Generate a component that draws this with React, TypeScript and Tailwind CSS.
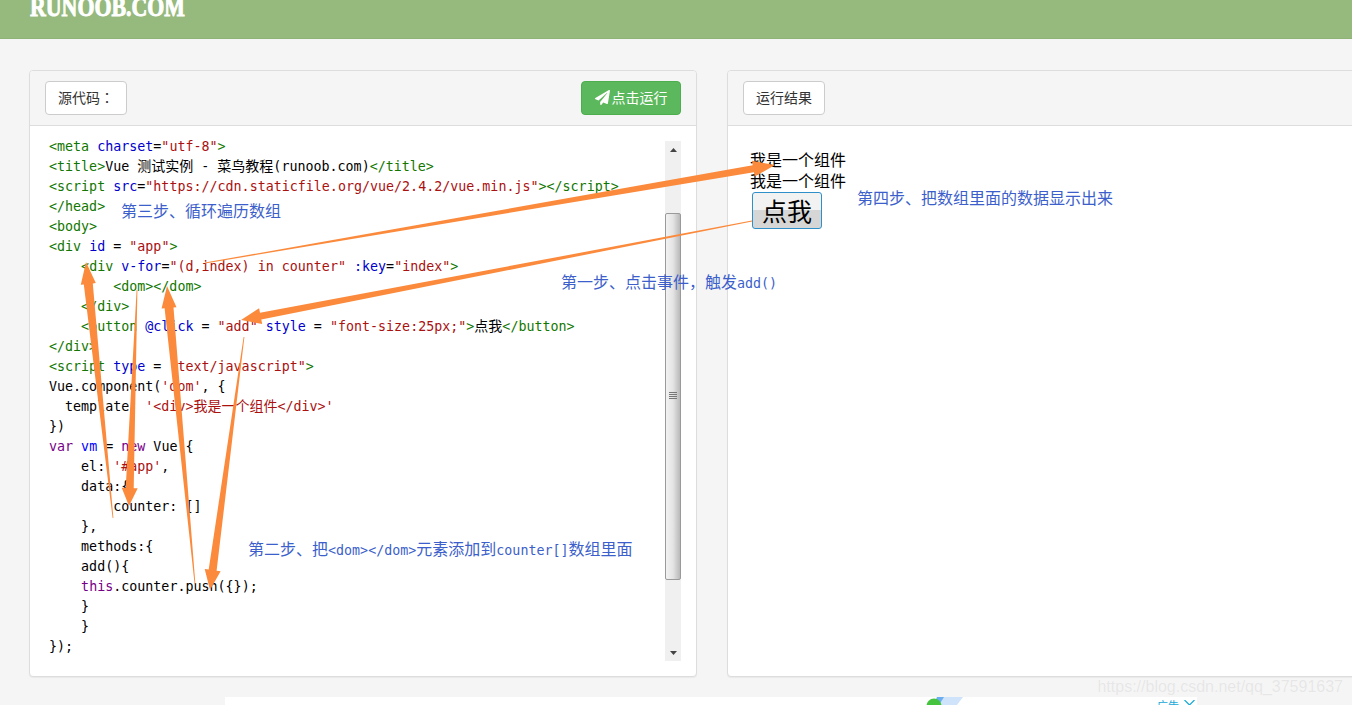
import type { ReactNode } from "react"
import { FaPaperPlane } from "react-icons/fa"

const cjk = '"Noto Sans CJK SC", sans-serif'

type Pt = [number, number]

// tapered arrow: thin at the start, thick at the head
function arrowPoints(from: Pt, to: Pt, headLen: number, headW: number, shaftW: number) {
  const dx = to[0] - from[0]
  const dy = to[1] - from[1]
  const len = Math.hypot(dx, dy)
  const ux = dx / len
  const uy = dy / len
  const nx = -uy
  const ny = ux
  const bx = to[0] - ux * headLen
  const by = to[1] - uy * headLen
  const p = (x: number, y: number) => `${x.toFixed(1)},${y.toFixed(1)}`
  return [
    p(from[0] + nx * 0.4, from[1] + ny * 0.4),
    p(bx + (nx * shaftW) / 2, by + (ny * shaftW) / 2),
    p(bx + (nx * headW) / 2, by + (ny * headW) / 2),
    p(to[0], to[1]),
    p(bx - (nx * headW) / 2, by - (ny * headW) / 2),
    p(bx - (nx * shaftW) / 2, by - (ny * shaftW) / 2),
    p(from[0] - nx * 0.4, from[1] - ny * 0.4),
  ].join(" ")
}

const arrows: { from: Pt; to: Pt; len: number; w: number; shaft: number }[] = [
  { from: [205, 263], to: [775, 165], len: 22, w: 16, shaft: 7 },
  { from: [752, 221], to: [241, 320], len: 20, w: 16, shaft: 7 },
  { from: [113, 518], to: [86, 262], len: 22, w: 15, shaft: 9 },
  { from: [137, 290], to: [129, 506], len: 18, w: 16, shaft: 8 },
  { from: [195, 584], to: [167, 286], len: 22, w: 15, shaft: 9 },
  { from: [244, 337], to: [210, 590], len: 20, w: 16, shaft: 8 },
]

const G = ({ children }: { children: ReactNode }) => <span className="text-[#117700]">{children}</span>
const A = ({ children }: { children: ReactNode }) => <span className="text-[#0000cc]">{children}</span>
const S = ({ children }: { children: ReactNode }) => <span className="text-[#aa1111]">{children}</span>
const K = ({ children }: { children: ReactNode }) => <span className="text-[#770088]">{children}</span>
const D = ({ children }: { children: ReactNode }) => <span className="text-[#0000ff]">{children}</span>
const C = ({ children }: { children: ReactNode }) => (
  <span className="text-[14px] leading-none" style={{ fontFamily: cjk }}>{children}</span>
)

const codeLines: ReactNode[] = [
  <><G>&lt;meta</G> <A>charset</A>=<S>"utf-8"</S><G>&gt;</G></>,
  <><G>&lt;title&gt;</G>Vue <C>测试实例</C> - <C>菜鸟教程</C>(runoob.com)<G>&lt;/title&gt;</G></>,
  <><G>&lt;script</G> <A>src</A>=<S>"https://cdn.staticfile.org/vue/2.4.2/vue.min.js"</S><G>&gt;&lt;/script&gt;</G></>,
  <G>&lt;/head&gt;</G>,
  <G>&lt;body&gt;</G>,
  <><G>&lt;div</G> <A>id</A> = <S>"app"</S><G>&gt;</G></>,
  <>    <G>&lt;div</G> <A>v-for</A>=<S>"(d,index) in counter"</S> <A>:key</A>=<S>"index"</S><G>&gt;</G></>,
  <>        <G>&lt;dom&gt;&lt;/dom&gt;</G></>,
  <>    <G>&lt;/div&gt;</G></>,
  <>    <G>&lt;button</G> <A>@click</A> = <S>"add"</S> <A>style</A> = <S>"font-size:25px;"</S><G>&gt;</G><C>点我</C><G>&lt;/button&gt;</G></>,
  <G>&lt;/div&gt;</G>,
  <><G>&lt;script</G> <A>type</A> = <S>"text/javascript"</S><G>&gt;</G></>,
  <>Vue.component(<S>'dom'</S>, {"{"}</>,
  <>  template: <S>'&lt;div&gt;<C>我是一个组件</C>&lt;/div&gt;'</S></>,
  <>{"})"}</>,
  <><K>var</K> <D>vm</D> = <K>new</K> Vue({"{"}</>,
  <>    el: <S>'#app'</S>,</>,
  <>    data:{"{"}</>,
  <>        counter: []</>,
  <>    {"},"}</>,
  <>    methods:{"{"}</>,
  <>    add(){"{"}</>,
  <>    <K>this</K>.counter.push({"{}"});</>,
  <>    {"}"}</>,
  <>    {"}"}</>,
  <>{"});"}</>,
]

function Scrollbar() {
  return (
    <div className="flex h-[520px] w-[16px] shrink-0 flex-col bg-[#f0f0f0]">
      <div className="flex h-[17px] items-center justify-center">
        <svg width="7" height="4" viewBox="0 0 7 4"><path d="M3.500 0 7 4H0z" fill="#444" /></svg>
      </div>
      <div className="h-[55px]" />
      <div className="relative h-[367px] rounded-[2px] border border-[#9a9a9a] bg-gradient-to-r from-[#f2f2f2] via-[#e4e4e4] to-[#b9b9b9]">
        <div className="absolute top-[178px] left-[3px] flex w-[8px] flex-col gap-[1px]">
          <div className="h-px bg-[#777]" />
          <div className="h-px bg-[#777]" />
          <div className="h-px bg-[#777]" />
          <div className="h-px bg-[#777]" />
        </div>
      </div>
      <div className="flex-1" />
      <div className="flex h-[17px] items-center justify-center">
        <svg width="7" height="4" viewBox="0 0 7 4"><path d="M0 0h7L3.500 4z" fill="#444" /></svg>
      </div>
    </div>
  )
}

function LabelButton({ children }: { children: ReactNode }) {
  return (
    <div className="flex h-[34px] w-[82px] items-center justify-center rounded-[4px] border border-[#cccccc] bg-white pb-[2px] text-[14px] text-[#333333]">
      {children}
    </div>
  )
}

function Note({ className, children }: { className: string; children: ReactNode }) {
  return <div className={`absolute whitespace-pre text-[16px] leading-[22px] text-[#3c5fcb] ${className}`}>{children}</div>
}

const M = ({ children }: { children: ReactNode }) => (
  <span className="font-['DejaVu_Sans_Mono'] text-[13.33px]">{children}</span>
)

export default function App() {
  return (
    <div className="relative h-[705px] w-[1352px] overflow-hidden bg-[#f5f5f5]" style={{ fontFamily: cjk }}>
      <header className="h-[39px] overflow-hidden border-b border-[#8fb376] bg-[#96b97d] pl-[30px]">
        <div className="mt-[-11px] origin-left scale-x-[0.81] font-['Liberation_Serif'] text-[27px] leading-[36px] font-bold text-white [-webkit-text-stroke:1px_white]">
          RUNOOB.COM
        </div>
      </header>

      <main className="flex gap-[30px] pt-[31px] pl-[29px]">
        <section className="flex h-[607px] w-[668px] shrink-0 flex-col overflow-hidden rounded-[4px] border border-[#dddddd] bg-white shadow-[0_1px_1px_rgba(0,0,0,0.05)]">
          <div className="flex h-[55px] shrink-0 items-center justify-between border-b border-[#dddddd] bg-[#f5f5f5] px-[15px]">
            <LabelButton>源代码<span style={{ fontFamily: '"Noto Sans CJK TC", sans-serif' }}>：</span></LabelButton>
            <div className="flex h-[34px] w-[100px] items-center justify-center gap-[2px] rounded-[4px] border border-[#4cae4c] bg-[#5cb85c] pb-[2px] text-[14px] text-white">
              <FaPaperPlane className="h-[15px] w-[15px]" />
              点击运行
            </div>
          </div>
          <div className="flex flex-1 pr-[15px] pl-[19px]">
            <pre className="flex-1 overflow-hidden pt-[11px] font-['DejaVu_Sans_Mono'] text-[13.33px] leading-[20px] text-black">
              {codeLines.map((line, i) => (
                <div key={i} className="h-[20px] whitespace-pre">{line}</div>
              ))}
            </pre>
            <div className="pt-[15px]">
              <Scrollbar />
            </div>
          </div>
        </section>

        <section className="flex h-[607px] w-[668px] shrink-0 flex-col overflow-hidden rounded-[4px] border border-[#dddddd] bg-white shadow-[0_1px_1px_rgba(0,0,0,0.05)]">
          <div className="flex h-[55px] shrink-0 items-center border-b border-[#dddddd] bg-[#f5f5f5] px-[15px]">
            <LabelButton>运行结果</LabelButton>
          </div>
          <div className="pt-[23px] pl-[22px] text-[16px] leading-[21px] text-black">
            <div>我是一个组件</div>
            <div>我是一个组件</div>
            <div className="mt-[1px] ml-[2px] flex h-[37px] w-[70px] items-center justify-center rounded-[3px] border border-[#2f8fc9] bg-gradient-to-b from-[#f2f2f2] from-50% to-[#d6d6d6] to-50% text-[25px] leading-none">
              点我
            </div>
          </div>
        </section>
      </main>

      <div className="mt-[20px] ml-[225px] flex h-[8px] w-[972px] overflow-hidden bg-white">
        <svg className="ml-[701px] shrink-0" width="40" height="8" viewBox="0 0 40 8">
          <path d="M11 0h26l-6 8H8z" fill="#cfe3fb" />
          <path d="M11 0h7l-5 8H8z" fill="#6aaef0" />
          <circle cx="8" cy="9" r="7.500" fill="#45c33f" />
        </svg>
        <span className="mt-[1px] ml-[191px] text-[11px] leading-[14px] whitespace-nowrap text-[#18a8d8]">广告</span>
        <svg className="mt-[3px] ml-[5px] shrink-0" width="11" height="5" viewBox="0 0 11 5">
          <path d="M0.500 0 5.500 5 10.500 0" stroke="#18a8d8" strokeWidth="1.200" fill="none" />
        </svg>
      </div>

      <svg className="pointer-events-none absolute top-0 left-0" width="1352" height="705" viewBox="0 0 1352 705">
        {arrows.map((a, i) => (
          <polygon key={i} points={arrowPoints(a.from, a.to, a.len, a.w, a.shaft)} fill="#fb8a3c" />
        ))}
      </svg>

      <Note className="top-[199px] left-[121px]">第三步、循环遍历数组</Note>
      <Note className="top-[186px] left-[857px]">第四步、把数组里面的数据显示出来</Note>
      <Note className="top-[270px] left-[561px]">第一步、点击事件，触发<M>add()</M></Note>
      <Note className="top-[537px] left-[248px]">第二步、把<M>&lt;dom&gt;&lt;/dom&gt;</M>元素添加到<M>counter[]</M>数组里面</Note>

      <div className="absolute top-[677px] right-[9px] font-['Liberation_Sans'] text-[16px] leading-[20px] text-[#e6e6e6] [text-shadow:0_0_1px_#ffffff]">
        https://blog.csdn.net/qq_37591637
      </div>
    </div>
  )
}
